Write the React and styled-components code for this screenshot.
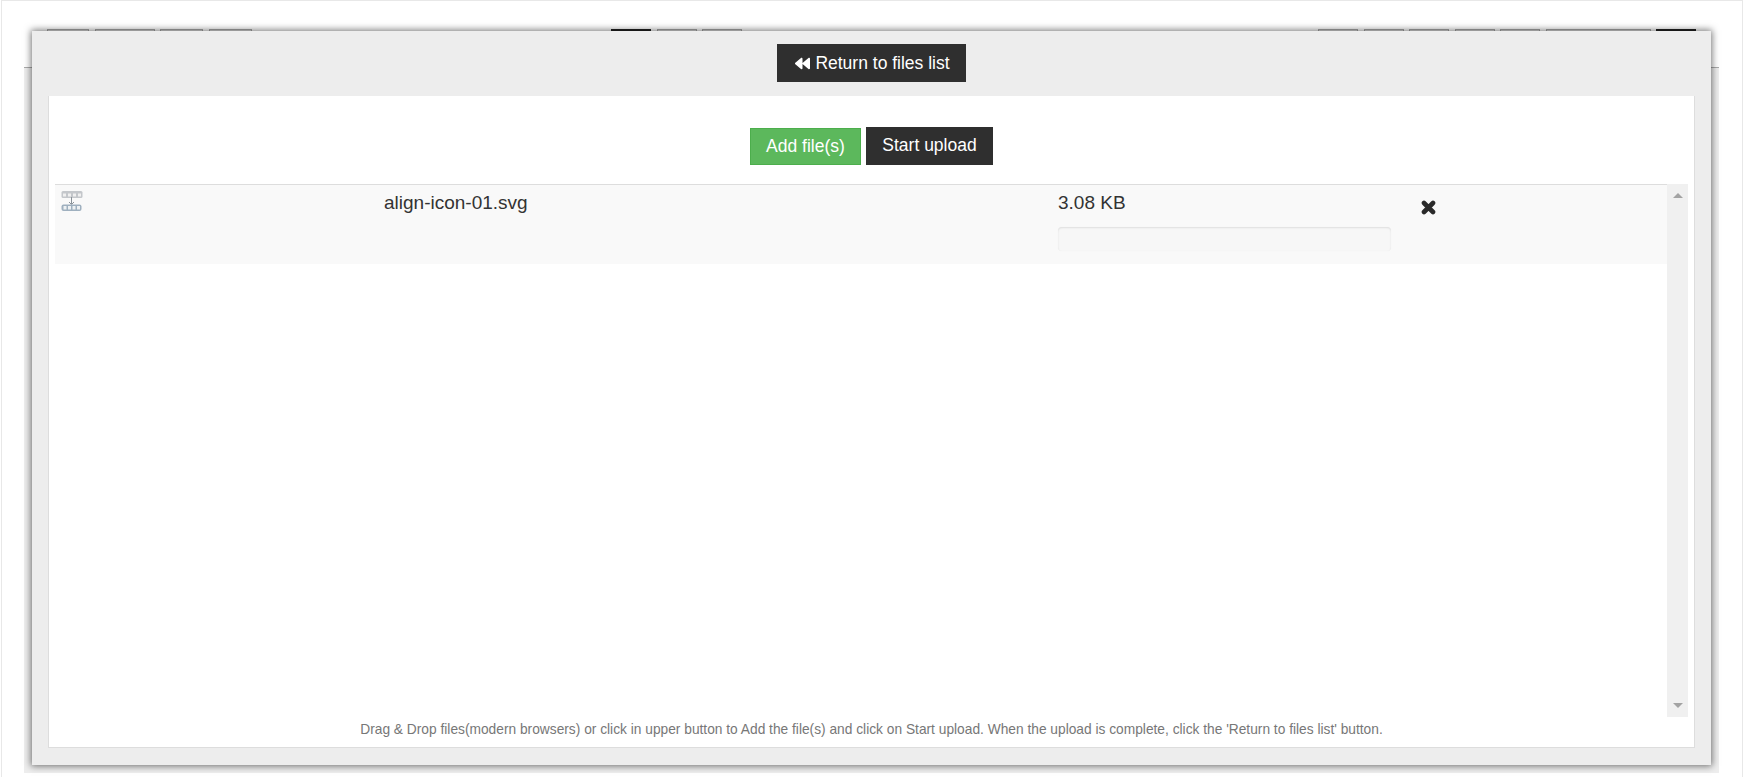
import React from 'react';
import styled, { createGlobalStyle } from 'styled-components';
import { FaBackward } from 'react-icons/fa';

const leftTabs = [42, 60, 43, 43];
const middleTabs = [
  { width: 40, dark: true },
  { width: 40 },
  { width: 40 },
];
const rightTabs = [
  { width: 40 },
  { width: 40 },
  { width: 40 },
  { width: 40 },
  { width: 40 },
  { width: 105 },
  { width: 40, dark: true },
];

export default function App() {
  return (
    <>
      <GlobalStyle />
      <Page>
        <Backdrop>
          <TabBar>
            <TabGroup>
              {leftTabs.map((width, index) => (
                <Tab key={index} $width={width} />
              ))}
            </TabGroup>
            <TabGroup>
              {middleTabs.map((tab, index) => (
                <Tab key={index} $width={tab.width} $dark={tab.dark} />
              ))}
            </TabGroup>
            <TabGroup>
              {rightTabs.map((tab, index) => (
                <Tab key={index} $width={tab.width} $dark={tab.dark} />
              ))}
            </TabGroup>
          </TabBar>
          <BackdropBody />
        </Backdrop>
        <Modal>
          <ModalHeader>
            <DarkButton>
              <FaBackward size={15} />
              Return to files list
            </DarkButton>
          </ModalHeader>
          <Panel>
            <Actions>
              <AddButton>Add file(s)</AddButton>
              <StartButton>Start upload</StartButton>
            </Actions>
            <FileArea>
              <FileList>
                <FileRow>
                  <Thumb>
                    <svg width="22" height="22" viewBox="0 0 22 22">
                      <rect x="0.5" y="1" width="21" height="7" rx="1.5" fill="#c4c7cb" />
                      <g fill="#f0f0f0">
                        <rect x="2" y="3.5" width="3" height="3" />
                        <rect x="7" y="3.5" width="3" height="3" />
                        <rect x="12" y="3.5" width="3" height="3" />
                        <rect x="17" y="3.5" width="3" height="3" />
                      </g>
                      <path d="M10.5 7v7M8 12l2.5 2.5L13 12" stroke="#8a9299" fill="none" />
                      <rect x="0.5" y="14.5" width="20" height="6.5" rx="2" fill="#9fb0bf" />
                      <g fill="#eef1f3">
                        <rect x="2.5" y="16" width="3" height="3.5" />
                        <rect x="7" y="16" width="3" height="3.5" />
                        <rect x="11.5" y="16" width="3" height="3.5" />
                        <rect x="16" y="16" width="3" height="3.5" />
                      </g>
                    </svg>
                  </Thumb>
                  <FileName>align-icon-01.svg</FileName>
                  <SizeCell>
                    <FileSize>3.08 KB</FileSize>
                    <Progress />
                  </SizeCell>
                  <RemoveCell>
                    <svg width="15" height="15" viewBox="0 0 15 15">
                      <path d="M3 3l9 9M12 3l-9 9" stroke="#2a2a2a" strokeWidth="4.6" strokeLinecap="round" />
                    </svg>
                  </RemoveCell>
                </FileRow>
              </FileList>
              <ScrollTrack>
                <ScrollArrow $up />
                <ScrollArrow />
              </ScrollTrack>
            </FileArea>
            <Hint>
              Drag &amp; Drop files(modern browsers) or click in upper button to Add the file(s) and click on Start upload. When the upload is complete, click the 'Return to files list' button.
            </Hint>
          </Panel>
        </Modal>
      </Page>
    </>
  );
}

const GlobalStyle = createGlobalStyle`
  html, body {
    margin: 0;
    background: #fff;
    font-family: "Liberation Sans", Arial, sans-serif;
    color: #333;
  }
`;

const Page = styled.div`
  border-left: 1px solid #e8e8e8;
  border-right: 1px solid #e8e8e8;
  border-top: 1px solid #e8e8e8;
  box-sizing: border-box;
  height: 777px;
  margin: 0 1px;
  overflow: hidden;
  padding: 28px 22px 4px 22px;
  position: relative;
  width: 1742px;
`;

const Backdrop = styled.div`
  display: flex;
  flex-direction: column;
  height: 744px;
  width: 1695px;
`;

const TabBar = styled.div`
  border-bottom: 1px solid #aaa;
  display: flex;
  height: 38px;
  padding: 0 23px;
`;

const TabGroup = styled.div`
  display: flex;
  gap: 5.5px;

  & + & {
    margin-left: 359.5px;
  }

  & + & + & {
    margin-left: 576px;
  }
`;

const Tab = styled.div`
  background: ${(props) => (props.$dark ? '#222' : '#ddd')};
  border: 1px solid ${(props) => (props.$dark ? '#222' : '#aaa')};
  box-sizing: border-box;
  height: 34px;
  width: ${(props) => props.$width}px;
`;

const BackdropBody = styled.div`
  background: #eee;
  flex: 1;
`;

const Modal = styled.div`
  background: #ededed;
  box-shadow: 0 0 7px 1px rgba(0, 0, 0, 0.55);
  box-sizing: border-box;
  display: flex;
  flex-direction: column;
  height: 734px;
  left: 30px;
  padding: 0 16px 17px 16px;
  position: absolute;
  top: 30px;
  width: 1679px;
`;

const ModalHeader = styled.div`
  align-items: flex-start;
  box-sizing: border-box;
  display: flex;
  height: 65px;
  justify-content: center;
  padding-top: 13px;
`;

const DarkButton = styled.div`
  align-items: center;
  background: #2f2f2f;
  box-sizing: border-box;
  color: #fff;
  display: flex;
  font-size: 17.5px;
  gap: 5px;
  height: 38px;
  justify-content: center;
  padding-left: 2px;
  width: 189px;
`;

const Panel = styled.div`
  background: #fff;
  border-bottom: 1px solid #ddd;
  border-left: 1px solid #ddd;
  border-right: 1px solid #ddd;
  box-sizing: border-box;
  display: flex;
  flex: 1;
  flex-direction: column;
  padding: 31px 6px 0;
`;

const Actions = styled.div`
  align-items: flex-end;
  display: flex;
  gap: 5px;
  height: 38px;
  justify-content: center;
  margin-bottom: 19px;
`;

const AddButton = styled.div`
  align-items: center;
  background: #5cb85c;
  border: 1px solid #4cae4c;
  box-sizing: border-box;
  color: #fff;
  display: flex;
  font-size: 17.5px;
  height: 37px;
  justify-content: center;
  width: 111px;
`;

const StartButton = styled.div`
  align-items: center;
  background: #2f2f2f;
  box-sizing: border-box;
  color: #fff;
  display: flex;
  font-size: 17.5px;
  height: 38px;
  justify-content: center;
  padding-bottom: 2px;
  width: 127px;
`;

const FileArea = styled.div`
  display: flex;
  height: 533px;
`;

const FileList = styled.div`
  flex: 1;
`;

const FileRow = styled.div`
  background: #f9f9f9;
  border-top: 1px solid #ddd;
  box-sizing: border-box;
  display: grid;
  grid-template-columns: 329px 674px 363px 1fr;
  height: 80px;
`;

const Thumb = styled.div`
  padding: 5px 0 0 6px;
`;

const FileName = styled.div`
  font-size: 19px;
  line-height: 22px;
  padding-top: 7px;
`;

const SizeCell = styled.div`
  padding-top: 7px;
`;

const FileSize = styled.div`
  font-size: 19px;
  line-height: 22px;
`;

const Progress = styled.div`
  background: #f7f7f7;
  border-radius: 4px;
  box-shadow: inset 0 1px 2px rgba(0, 0, 0, 0.1), 0 0 1px rgba(0, 0, 0, 0.06);
  height: 24px;
  margin-top: 13px;
  width: 333px;
`;

const RemoveCell = styled.div`
  padding-top: 15px;
`;

const ScrollTrack = styled.div`
  align-items: center;
  background: #f0f0f0;
  box-sizing: border-box;
  display: flex;
  flex-direction: column;
  justify-content: space-between;
  padding: 9px 0;
  width: 21px;
`;

const ScrollArrow = styled.div`
  border-left: 5px solid transparent;
  border-right: 5px solid transparent;
  ${(props) => (props.$up ? 'border-bottom: 5px solid #a3a3a3;' : 'border-top: 5px solid #a3a3a3;')}
  height: 0;
  width: 0;
`;

const Hint = styled.div`
  color: #777;
  font-size: 13.75px;
  line-height: 20px;
  padding-top: 3px;
  text-align: center;
`;
